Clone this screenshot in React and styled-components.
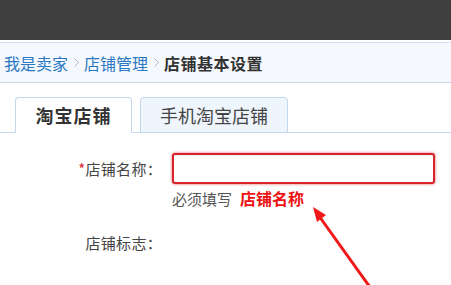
import React from 'react';
import styled, { createGlobalStyle } from 'styled-components';

const GlobalStyle = createGlobalStyle`
  html, body {
    margin: 0;
    padding: 0;
    background: #fff;
    font-family: "Noto Sans CJK SC", "Noto Sans", sans-serif;
    overflow: hidden;
  }
`;

const Page = styled.div`
  position: relative;
  width: 451px;
  height: 285px;
  overflow: hidden;
`;

const TopBar = styled.div`
  height: 40px;
  background: #3f3f3f;
`;

const Breadcrumb = styled.nav`
  margin-top: 2px;
  height: 39px;
  display: flex;
  align-items: center;
  padding-left: 4px;
  background: #f5f9fd;
  border-top: 1px solid #cfe0f1;
  border-bottom: 1px solid #c3d7ec;
  font-size: 16px;
`;

const Crumb = styled.span`
  color: ${(p) => (p.current ? '#333' : '#2a78c2')};
  font-weight: ${(p) => (p.current ? 700 : 400)};
  letter-spacing: ${(p) => (p.current ? '0.5px' : '0')};
`;

const Sep = styled.svg`
  margin: 0 5px 0 6px;
  width: 5px;
  height: 9px;
`;

const TabBar = styled.div`
  margin-top: 13px;
  padding-left: 15px;
  display: flex;
  align-items: flex-end;
  gap: 8px;
  border-bottom: 1px solid #c3d7ec;
  height: 36px;
`;

const Tab = styled.div`
  box-sizing: border-box;
  width: ${(p) => p.w}px;
  height: 36px;
  margin-bottom: -1px;
  display: flex;
  align-items: center;
  justify-content: center;
  border: 1px solid #c3d7ec;
  border-bottom-color: ${(p) => (p.active ? '#fff' : '#c3d7ec')};
  border-radius: 4px 4px 0 0;
  background: ${(p) => (p.active ? '#fff' : '#eef5fd')};
  color: ${(p) => (p.active ? '#333' : '#444')};
  font-size: 18px;
  font-weight: ${(p) => (p.active ? 700 : 400)};
  letter-spacing: ${(p) => (p.active ? '1px' : '0')};
`;

const Form = styled.div`
  padding-top: 20px;
`;

const Row = styled.div`
  display: flex;
  align-items: center;
  margin-top: ${(p) => p.gap || 0}px;
`;

const Label = styled.div`
  width: 162px;
  flex: none;
  text-align: right;
  font-size: 15px;
  line-height: 20px;
  color: #444;
  letter-spacing: 0.3px;
`;

const Star = styled.span`
  color: #e0262c;
`;

const Input = styled.div`
  box-sizing: border-box;
  margin-left: 10px;
  width: 263px;
  height: 31px;
  border: 2px solid #d8232c;
  border-radius: 3px;
  background: #fff;
  box-shadow: 0 0 3px rgba(220, 30, 40, 0.7), inset 0 1px 1px rgba(0, 0, 0, 0.06);
`;

const Hint = styled.div`
  margin: 4px 0 0 172px;
  font-size: 15px;
  line-height: 20px;
  color: #555;
`;

const HintStrong = styled.b`
  color: #ee1111;
  font-size: 16px;
  margin-left: 8px;
`;

const Arrow = styled.svg`
  position: absolute;
  left: 0;
  top: 0;
  width: 451px;
  height: 285px;
  pointer-events: none;
`;

export default function App() {
  return (
    <Page>
      <GlobalStyle />
      <TopBar />
      <Breadcrumb>
        <Crumb>我是卖家</Crumb>
        <Sep viewBox="0 0 5 9">
          <path d="M0.5 0.5 L4.5 4.5 L0.5 8.5" fill="none" stroke="#b5b5b5" strokeWidth="1" />
        </Sep>
        <Crumb>店铺管理</Crumb>
        <Sep viewBox="0 0 5 9">
          <path d="M0.5 0.5 L4.5 4.5 L0.5 8.5" fill="none" stroke="#b5b5b5" strokeWidth="1" />
        </Sep>
        <Crumb current>店铺基本设置</Crumb>
      </Breadcrumb>
      <TabBar>
        <Tab active w={117}>淘宝店铺</Tab>
        <Tab w={148}>手机淘宝店铺</Tab>
      </TabBar>
      <Form>
        <Row>
          <Label>
            <Star>*</Star>店铺名称：
          </Label>
          <Input />
        </Row>
        <Hint>
          必须填写<HintStrong>店铺名称</HintStrong>
        </Hint>
        <Row gap={24}>
          <Label>店铺标志：</Label>
        </Row>
      </Form>
      <Arrow viewBox="0 0 451 285">
        <line x1="372" y1="290" x2="319" y2="216" stroke="#f01818" strokeWidth="3" />
        <polygon points="313,207 326,215 317,222" fill="#f01818" />
      </Arrow>
    </Page>
  );
}
